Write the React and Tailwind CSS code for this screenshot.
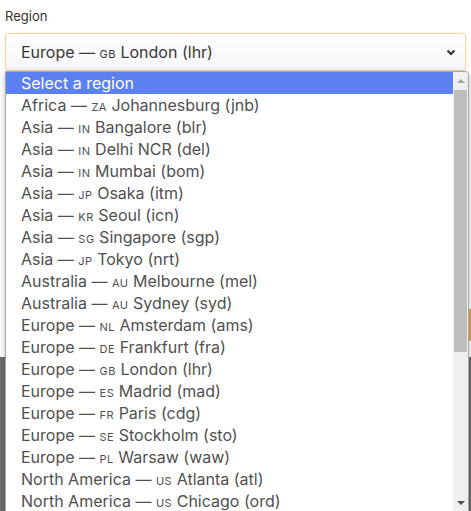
import React from "react";

const regions = [
  ["Africa", "ZA", "Johannesburg", "jnb"],
  ["Asia", "IN", "Bangalore", "blr"],
  ["Asia", "IN", "Delhi NCR", "del"],
  ["Asia", "IN", "Mumbai", "bom"],
  ["Asia", "JP", "Osaka", "itm"],
  ["Asia", "KR", "Seoul", "icn"],
  ["Asia", "SG", "Singapore", "sgp"],
  ["Asia", "JP", "Tokyo", "nrt"],
  ["Australia", "AU", "Melbourne", "mel"],
  ["Australia", "AU", "Sydney", "syd"],
  ["Europe", "NL", "Amsterdam", "ams"],
  ["Europe", "DE", "Frankfurt", "fra"],
  ["Europe", "GB", "London", "lhr"],
  ["Europe", "ES", "Madrid", "mad"],
  ["Europe", "FR", "Paris", "cdg"],
  ["Europe", "SE", "Stockholm", "sto"],
  ["Europe", "PL", "Warsaw", "waw"],
  ["North America", "US", "Atlanta", "atl"],
  ["North America", "US", "Chicago", "ord"],
];

function RegionLabel({ area, code, city, id }) {
  return (
    <>
      {area} — <span className="text-[11px] leading-none tracking-[0.5px]">{code}</span> {city} ({id})
    </>
  );
}

export default function App() {
  return (
    <div
      className="relative w-[471px] h-[511px] overflow-hidden bg-white"
      style={{ fontFamily: "Inter, 'Noto Sans', sans-serif" }}
    >
      {/* form */}
      <div className="px-[5px] pt-[6px]">
        <label className="block text-[13px] text-[#333] leading-[20px]">Region</label>
        <div className="mt-[7px] h-[38px] flex items-center justify-between rounded-[4px] border border-[#efd9a8] bg-gradient-to-b from-white to-[#f6f6f8] pl-[15px] pr-[8px] shadow-[0_0_2px_rgba(230,190,110,0.5)]">
          <span className="text-[16px] text-[#383838] leading-none">
            <RegionLabel area="Europe" code="GB" city="London" id="lhr" />
          </span>
          <svg width="10" height="8" viewBox="0 0 10 8" className="mr-[1px]">
            <path d="M1.5 2.5 L5 6 L8.5 2.5" fill="none" stroke="#333" strokeWidth="2" />
          </svg>
        </div>

        {/* content underneath */}
        <div className="mt-[218px] border-t border-[#ddd]" />
        <div className="mt-[19px] -mr-[5px] flex justify-end">
          <div className="h-[32px] w-[90px] rounded-l-[4px] bg-[#e0a84a]" />
        </div>
      </div>
      <div className="mt-[16px] h-[160px] bg-[#6e6e6e]" />

      {/* open option list */}
      <div className="absolute left-[5px] top-[71px] w-[464px] h-[442px] flex border border-[#a5a5a5] bg-white rounded-tr-[4px] shadow-[0_2px_6px_rgba(0,0,0,0.25)]">
        <ul className="flex-1 text-[16px] text-[#505050]">
          <li className="h-[22px] leading-[22px] bg-[#5b80f2] text-white pl-[15px]">Select a region</li>
          {regions.map(([area, code, city, id]) => (
            <li key={city} className="h-[22px] leading-[22px] pl-[15px] whitespace-nowrap">
              <RegionLabel area={area} code={code} city={city} id={id} />
            </li>
          ))}
        </ul>
        <div className="w-[15px] bg-[#efefef] flex flex-col items-center rounded-tr-[4px]">
          <svg width="8" height="6" viewBox="0 0 8 6" className="mt-[6px]">
            <path d="M0 5 L4 1 L8 5 Z" fill="#a3a3a3" />
          </svg>
          <div className="mt-[6px] w-[13px] h-[262px] bg-[#bebebe]" />
          <div className="flex-1" />
          <svg width="8" height="6" viewBox="0 0 8 6" className="mb-[6px]">
            <path d="M0 1 L4 5 L8 1 Z" fill="#505050" />
          </svg>
        </div>
      </div>
    </div>
  );
}
